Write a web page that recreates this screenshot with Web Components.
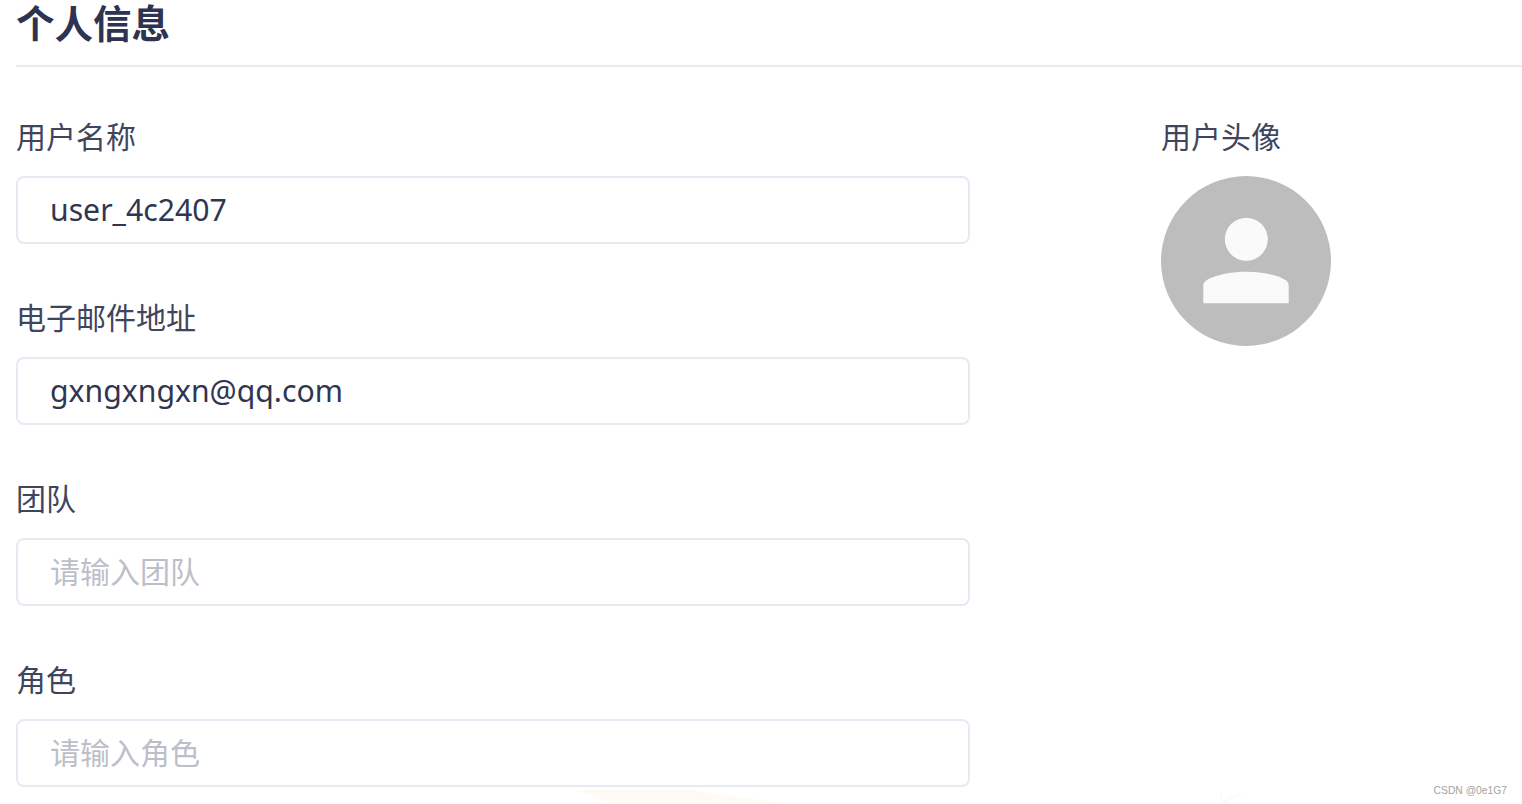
<!DOCTYPE html>
<html lang="zh">
<head>
<meta charset="utf-8">
<title>个人信息</title>
<style>
  html, body { margin: 0; height: 100%; background: #fff; overflow: hidden; }
  body { font-family: "Noto Sans", "Noto Sans CJK SC", sans-serif; color: #303651; }
</style>
</head>
<body>
<profile-page>
  <form-field label="用户名称" value="user_4c2407"></form-field>
  <form-field label="电子邮件地址" value="gxngxngxn@qq.com"></form-field>
  <form-field label="团队" placeholder="请输入团队"></form-field>
  <form-field label="角色" placeholder="请输入角色"></form-field>
  <user-avatar slot="side" label="用户头像"></user-avatar>
</profile-page>
<script>
class FormField extends HTMLElement {
  constructor() {
    super();
    this.attachShadow({ mode: 'open' });
  }
  connectedCallback() {
    const value = this.getAttribute('value');
    const text = value ?? this.getAttribute('placeholder') ?? '';
    this.shadowRoot.innerHTML = `
      <style>
        :host { display: block; height: 181px; }
        label {
          display: block;
          height: 38px;
          margin-bottom: 21px;
          font: 30px/36px "Noto Sans CJK SC", sans-serif;
          color: #3f455c;
        }
        .box {
          box-sizing: border-box;
          height: 68px;
          padding: 0 32px;
          display: flex;
          align-items: center;
          background: #fff;
          border: 2px solid #e7e9f3;
          border-radius: 8px;
          font: 30.2px/1 "Noto Sans", "Noto Sans CJK SC", sans-serif;
          color: #303651;
        }
        .placeholder { color: #bcbfc9; font: 30px/1 "Noto Sans CJK SC", sans-serif; padding-bottom: 4px; }
      </style>
      <label>${this.getAttribute('label')}</label>
      <div class="box${value ? '' : ' placeholder'}">${text}</div>
    `;
  }
}

class UserAvatar extends HTMLElement {
  constructor() {
    super();
    this.attachShadow({ mode: 'open' });
  }
  connectedCallback() {
    this.shadowRoot.innerHTML = `
      <style>
        :host { display: block; }
        label {
          display: block;
          height: 38px;
          margin-bottom: 21px;
          font: 30px/36px "Noto Sans CJK SC", sans-serif;
          color: #3f455c;
        }
        svg { display: block; }
      </style>
      <label>${this.getAttribute('label')}</label>
      <svg width="170" height="170" viewBox="0 0 170 170">
        <circle cx="85" cy="85" r="85" fill="#bdbdbd"/>
        <circle cx="85.300" cy="63.300" r="21.500" fill="#fafafa"/>
        <path d="M42.300 127.300V109C42.300 102 64 95.700 85.300 95.700S127.700 102 127.700 109V127.300Z" fill="#fafafa"/>
      </svg>
    `;
  }
}

class ProfilePage extends HTMLElement {
  constructor() {
    super();
    this.attachShadow({ mode: 'open' });
    this.shadowRoot.innerHTML = `
      <style>
        :host {
          display: block;
          position: relative;
          height: 804px;
          padding-left: 16px;
          overflow: hidden;
        }
        h1 {
          margin: 0;
          height: 65px;
          border-bottom: 2px solid #e8eaf0;
          font: 700 38.500px/50px "Liberation Sans", "Noto Sans CJK SC", sans-serif;
          color: #2d3350;
        }
        .cols {
          display: grid;
          grid-template-columns: 954px 1fr;
          column-gap: 191px;
          padding-top: 50px;
        }
        .mark {
          position: absolute;
          right: 15px;
          bottom: 8px;
          transform: translateY(1px);
          font: 10.300px/12px "Liberation Sans", sans-serif;
          color: #a2a2a2;
        }
        .deco { position: absolute; left: 0; bottom: 0; }
      </style>
      <h1>个人信息</h1>
      <div class="cols">
        <div><slot></slot></div>
        <div><slot name="side"></slot></div>
      </div>
      <svg class="deco" width="1522" height="14" viewBox="0 0 1522 14">
        <path d="M575 0H688L790 14H615Z" fill="#fffaf4"/>
        <path d="M688 0L696 0L710 14H703Z" fill="#fbfaf8"/>
        <path d="M1220 14V3L1222 3V11L1242 1L1243 2L1226 14Z" fill="#fbfbfb"/>
      </svg>
      <div class="mark">CSDN @0e1G7</div>
    `;
  }
}

customElements.define('form-field', FormField);
customElements.define('user-avatar', UserAvatar);
customElements.define('profile-page', ProfilePage);
</script>
</body>
</html>
